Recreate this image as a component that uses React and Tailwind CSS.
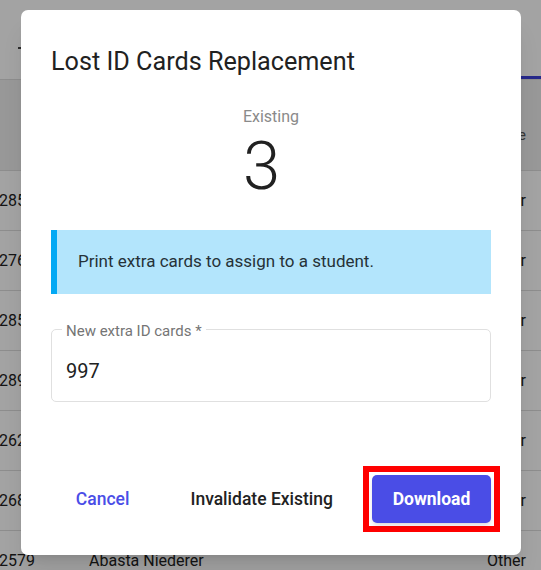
import React from 'react';

const rows = [
  { id: '2851', name: 'Aaron Baumgartner', type: 'Other' },
  { id: '2764', name: 'Abby Lindqvist', type: 'Other' },
  { id: '2853', name: 'Abdul Rahman', type: 'Other' },
  { id: '2897', name: 'Abel Fontaine', type: 'Other' },
  { id: '2620', name: 'Abigail Moreau', type: 'Other' },
  { id: '2688', name: 'Abraham Kowalski', type: 'Other' },
  { id: '2579', name: 'Abasta Niederer', type: 'Other' },
];

const font = { fontFamily: 'Roboto, "Liberation Sans", sans-serif' };

const BackgroundPage = () => (
  <div className="w-[541px] h-[570px] bg-white overflow-hidden text-[16px] text-[#222]">
    {/* tabs bar */}
    <div className="h-[80px] border-b border-[#ddd] flex items-end justify-between">
      <div className="ml-[18px] mb-[30px] w-[6px] h-[2px] bg-[#444]" />
      <div className="w-[38px] h-[3px] bg-[#3c3fd8]" />
    </div>
    {/* table header */}
    <div className="h-[91px] bg-[#eeeeee] border-b border-[#ddd] flex items-center justify-end pr-[15px] pt-[20px]">
      <span className="text-[15px] text-[#555]">Type</span>
    </div>
    {rows.map((r) => (
      <div key={r.id} className="h-[60px] border-b border-[#ddd] flex items-center">
        <span className="w-[90px] -ml-[1px]">{r.id}</span>
        <span className="flex-1">{r.name}</span>
        <span className="pr-[15px]">{r.type}</span>
      </div>
    ))}
  </div>
);

const App = () => {
  return (
    <div className="relative w-[541px] h-[570px] overflow-hidden" style={font}>
      <BackgroundPage />
      <div className="absolute inset-0 bg-black/[0.36]" />
      <div className="absolute left-[21px] top-[10px] w-[500px] h-[545px] bg-white rounded-[7px] shadow-xl flex flex-col px-[30px]">
        <h2 className="pt-[36px] text-[25.2px] leading-[32px] font-normal text-[#212121]">
          Lost ID Cards Replacement
        </h2>

        <div className="mt-[29px] flex justify-center">
          <div className="flex flex-col items-start">
            <div className="text-[16px] leading-[20px] text-[#8a8a8a]">Existing</div>
            <div className="mt-[3px] text-[67px] leading-[72px] font-light text-[#212121]">3</div>
          </div>
        </div>

        <div className="mt-[28px] h-[64px] bg-[#b3e5fc] border-l-[6px] border-[#03a9f4] flex items-center pl-[21px] text-[17px] text-[#263238]">
          Print extra cards to assign to a student.
        </div>

        <div className="relative mt-[35px] h-[73px] border border-[#e0e0e0] rounded-[5px] flex items-center pl-[14px] pt-[10px]">
          <span className="absolute -top-[8px] left-[10px] bg-white px-[4px] text-[15px] leading-[18px] text-[#757575]">
            New extra ID cards *
          </span>
          <span className="text-[20px] text-[#212121]">997</span>
        </div>

        <div className="mt-auto mb-[23px] -mr-[9px] flex items-center justify-end">
          <button className="text-[17.5px] font-medium text-[#4a4de7] h-[48px]">Cancel</button>
          <button className="ml-[61px] text-[17.5px] font-medium text-[#222] h-[48px]">
            Invalidate Existing
          </button>
          <div className="ml-[30px] border-[6px] border-[#ff0000] p-[3px]">
            <button className="w-[119px] h-[48px] rounded-[5px] bg-[#4a4de6] text-white text-[17.5px] font-bold shadow-md">
              Download
            </button>
          </div>
        </div>
      </div>
    </div>
  );
};

export default App;
